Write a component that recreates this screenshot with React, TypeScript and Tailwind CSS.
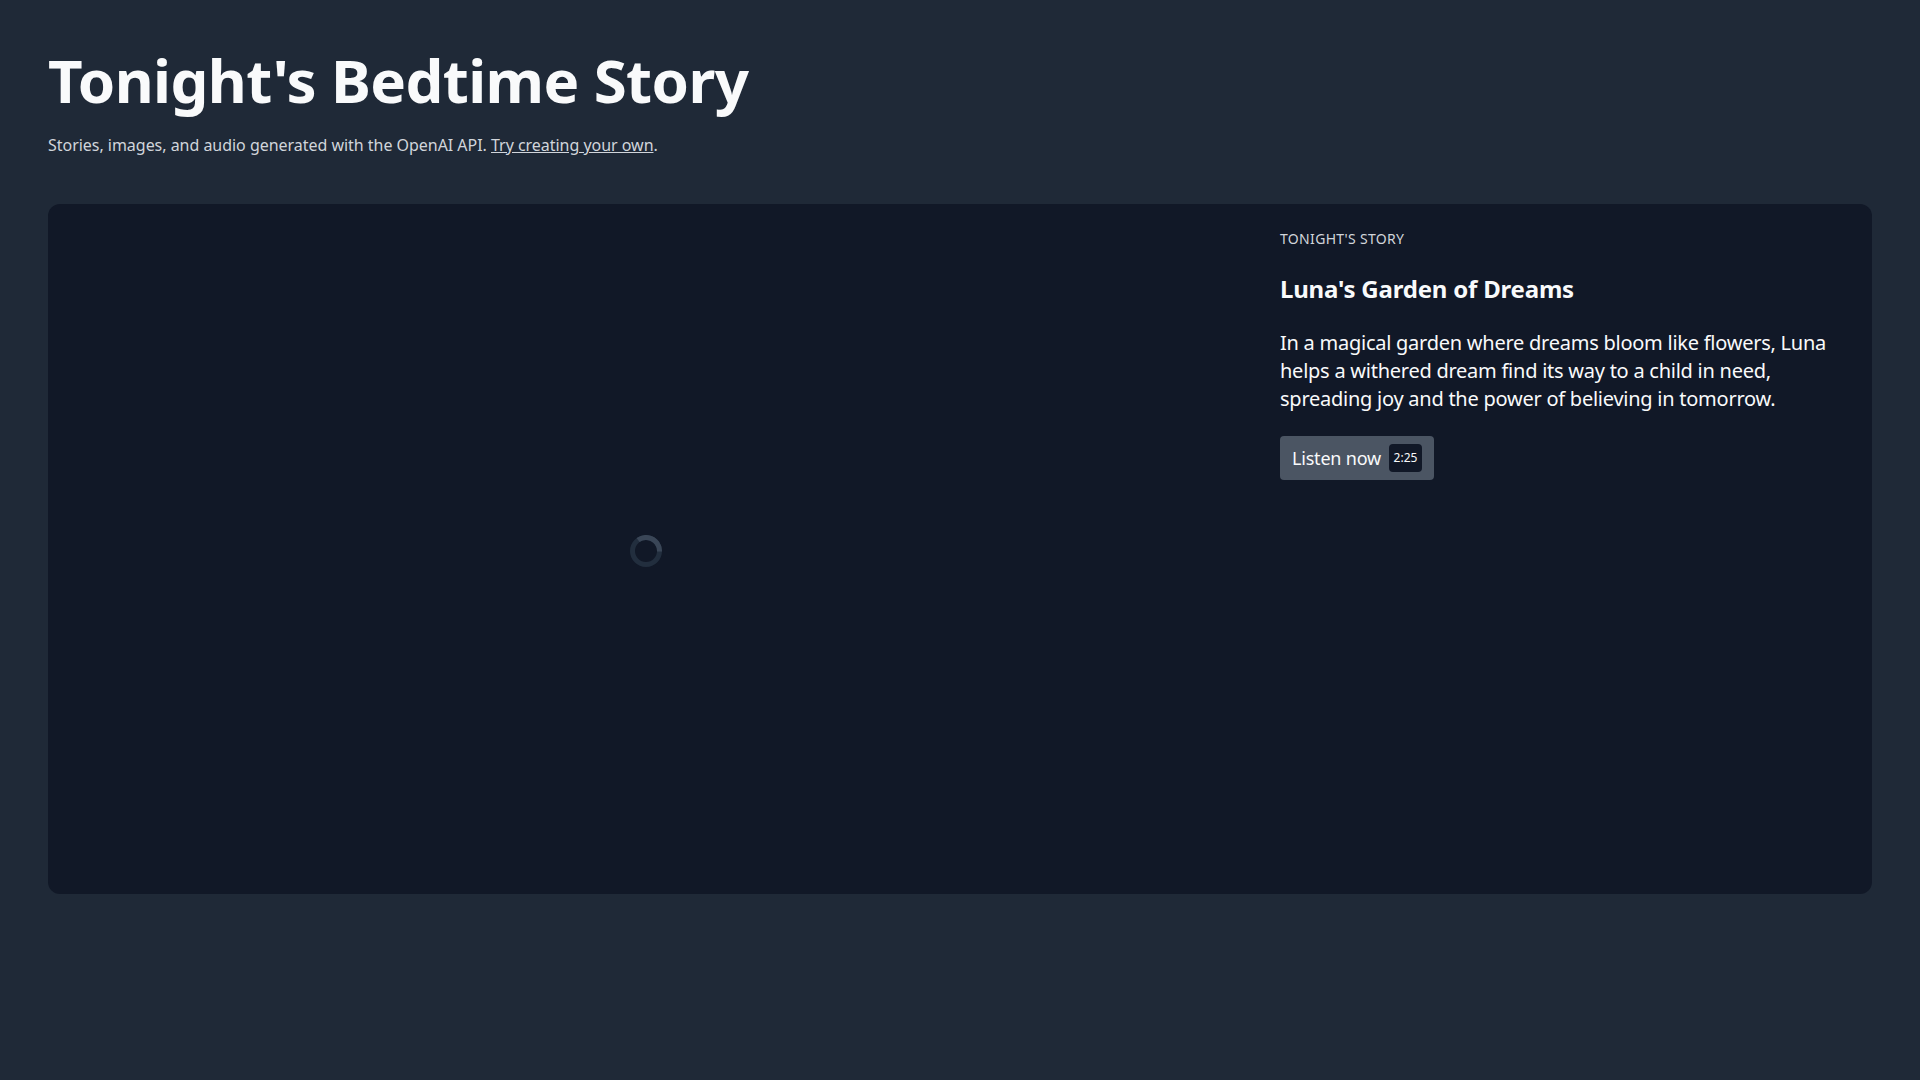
export default function App() {
  return (
    <div className="min-h-screen bg-[#1f2937] px-12 pt-[50px] text-white font-['Noto_Sans',sans-serif]">
      <h1 className="text-6xl font-bold tracking-[-0.6px] text-[#f9fafb]">Tonight's Bedtime Story</h1>
      <p className="mt-[23px] text-base tracking-[-0.03px] text-[#d1d5db]">
        Stories, images, and audio generated with the OpenAI API.{" "}
        <a className="underline">Try creating your own</a>.
      </p>
      <div className="mt-[47px] flex h-[690px] rounded-xl bg-[#111827]">
        <div className="flex w-[1196px] items-center justify-center pt-1">
          <svg className="size-8" viewBox="0 0 32 32" fill="none">
            <circle cx="16" cy="16" r="13.5" stroke="#222e3e" strokeWidth="5" />
            <circle cx="16" cy="16" r="13.5" stroke="#3a4657" strokeWidth="5" strokeDasharray="30 55" transform="rotate(-126 16 16)" />
          </svg>
        </div>
        <div className="flex-1 pl-9 pr-6 pt-[25px]">
          <p className="text-sm tracking-[0.33px] text-[#d1d5db] uppercase">Tonight's Story</p>
          <h2 className="mt-6 text-2xl font-bold tracking-[-0.2px] text-[#f9fafb]">Luna's Garden of Dreams</h2>
          <p className="mt-6 text-xl leading-7 tracking-[-0.25px] text-[#f9fafb]">
            In a magical garden where dreams bloom like flowers, Luna helps a withered dream find its way to a child in need, spreading joy and the power of believing in tomorrow.
          </p>
          <button className="mt-[23px] flex h-11 items-center gap-2 rounded bg-[#4b5563] px-3 text-lg tracking-[-0.2px] text-[#f9fafb]">
            Listen now
            <span className="flex h-7 w-[33px] items-center justify-center rounded bg-[#111827] text-xs tracking-normal">2:25</span>
          </button>
        </div>
      </div>
    </div>
  );
}
